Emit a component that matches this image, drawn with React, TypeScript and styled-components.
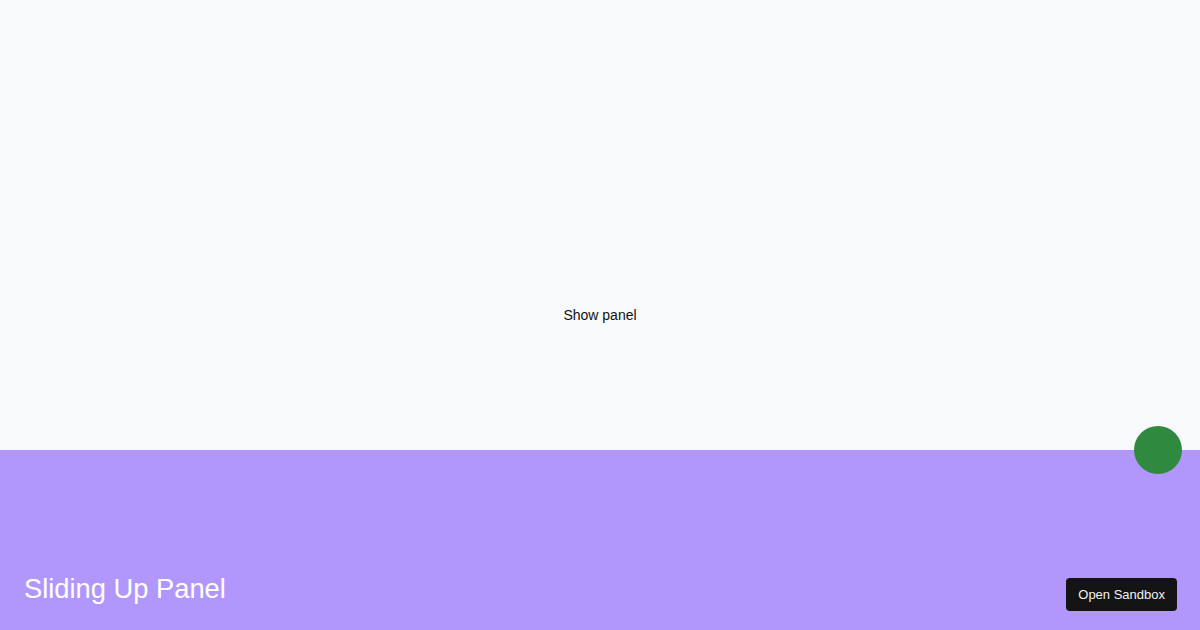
import React from 'react';
import styled, { createGlobalStyle } from 'styled-components';

const GlobalStyle = createGlobalStyle`
    * { box-sizing: border-box; }
    html, body {
        margin: 0;
        padding: 0;
        height: 100%;
        background: #f7f9fb;
        font-family: "Liberation Sans", Arial, sans-serif;
    }
    #root { height: 100%; }
`;

const Page = styled.div`
    position: relative;
    width: 1200px;
    height: 630px;
    overflow: hidden;
`;

const Stage = styled.div`
    height: 100%;
    display: flex;
    align-items: center;
    justify-content: center;
    background: #f7f9fb;
`;

const ShowButton = styled.button`
    background: none;
    border: none;
    padding: 0;
    font-family: inherit;
    font-size: 14px;
    line-height: 16px;
    color: #111;
    cursor: pointer;
`;

const Panel = styled.div`
    position: absolute;
    left: 0;
    right: 0;
    bottom: 0;
    height: 180px;
    background: #b197fc;
    display: flex;
    justify-content: space-between;
    align-items: flex-end;
    padding: 0 23px 19px 24px;
`;

const Handle = styled.div`
    position: absolute;
    top: -24px;
    right: 18px;
    width: 48px;
    height: 48px;
    border-radius: 50%;
    background: #2f8a3f;
`;

const Title = styled.h1`
    margin: 0 0 9px;
    font-size: 27.3px;
    font-weight: 400;
    line-height: 1;
    color: #ffffff;
`;

const SandboxButton = styled.button`
    height: 33px;
    padding: 0 12px;
    border: none;
    border-radius: 4px;
    background: #141414;
    color: #f2f2f2;
    font-family: inherit;
    font-size: 13px;
    cursor: pointer;
`;

export default function App() {
    return (
        <Page>
            <GlobalStyle />
            <Stage>
                <ShowButton>Show panel</ShowButton>
            </Stage>
            <Panel>
                <Handle />
                <Title>Sliding Up Panel</Title>
                <SandboxButton>Open Sandbox</SandboxButton>
            </Panel>
        </Page>
    );
}
